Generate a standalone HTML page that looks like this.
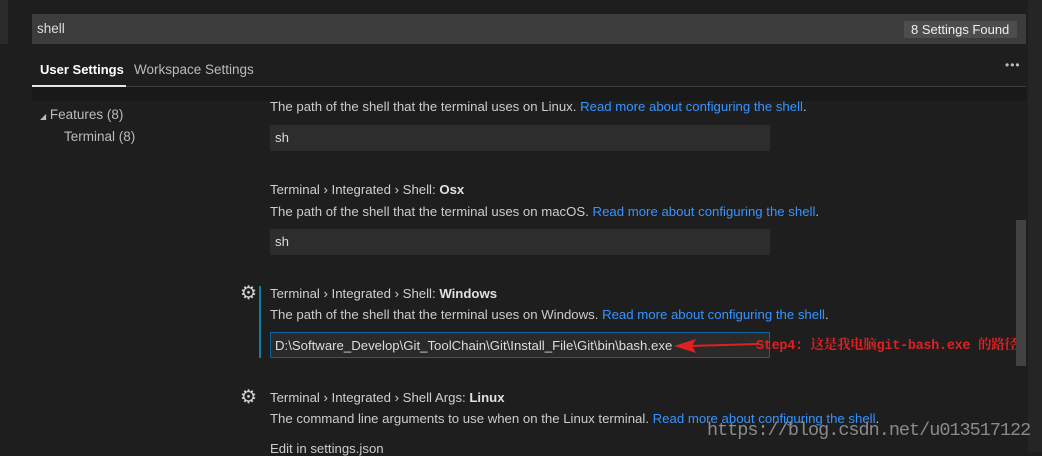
<!DOCTYPE html>
<html><head><meta charset="utf-8"><style>
*{margin:0;padding:0;box-sizing:border-box}
body{width:1042px;height:452px;background:#1e1e1e;font-family:"Liberation Sans",sans-serif;font-size:13.2px;color:#cccccc;position:relative;overflow:hidden;letter-spacing:0}
.a{position:absolute;white-space:nowrap}
.l{color:#3794ff}
.inp{position:absolute;left:270px;width:500px;height:26px;background:#2d2d2d;padding:5px 5px;color:#ddd}
b{color:#e0e0e0}
.t{color:#cfcfcf}
.g{position:absolute;font-size:19px;color:#d0d0d0;line-height:19px}
</style></head><body>
<div class="a" style="left:0;top:0;width:8px;height:44px;background:#2a2a2a"></div>
<div class="a" style="left:1028px;top:0;width:14px;height:452px;background:#252526"></div>
<div class="a" style="left:32px;top:14px;width:994px;height:30px;background:#3c3c3c"></div>
<div class="a" style="left:37px;top:21px;color:#ddd;font-size:13.5px">shell</div>
<div class="a" style="left:904px;top:21px;width:113px;height:17px;background:#4d4d4d;color:#eee;padding:1px 7px;font-size:13px">8 Settings Found</div>
<div class="a" style="left:40px;top:62px;color:#fff;font-weight:bold;font-size:13px">User Settings</div>
<div class="a" style="left:134px;top:62px;color:#bbb;font-size:13.5px">Workspace Settings</div>
<div class="a" style="left:1005px;top:58px;color:#bbb;font-size:12px;letter-spacing:1px">•••</div>
<div class="a" style="left:32px;top:86px;width:994px;height:1px;background:#3f3f3f"></div>
<div class="a" style="left:32px;top:85px;width:94px;height:2px;background:#e7e7e7"></div>
<div class="a" style="left:32px;top:87px;width:994px;height:14px;background:#191919"></div>
<div class="a" style="left:40px;top:107px;color:#bbb;font-size:13.5px"><span style="font-size:8px">◢</span> Features (8)</div>
<div class="a" style="left:64px;top:129px;color:#bbb;font-size:13.5px">Terminal (8)</div>
<div class="a" style="left:270px;top:99px">The path of the shell that the terminal uses on Linux. <span class="l">Read more about configuring the shell</span>.</div>
<div class="inp" style="top:125px">sh</div>
<div class="a t" style="left:270px;top:182px">Terminal › Integrated › Shell: <b>Osx</b></div>
<div class="a" style="left:270px;top:204px">The path of the shell that the terminal uses on macOS. <span class="l">Read more about configuring the shell</span>.</div>
<div class="inp" style="top:229px">sh</div>
<div class="a" style="left:259px;top:286px;width:2px;height:72px;background:#0e7fa0"></div>
<div class="g" style="left:240px;top:284px">⚙</div>
<div class="a t" style="left:270px;top:286px">Terminal › Integrated › Shell: <b>Windows</b></div>
<div class="a" style="left:270px;top:307px">The path of the shell that the terminal uses on Windows. <span class="l">Read more about configuring the shell</span>.</div>
<div class="inp" style="top:332px;border:1px solid #0e639c;background:#2a2a2a;padding:5px 4px">D:\Software_Develop\Git_ToolChain\Git\Install_File\Git\bin\bash.exe</div>
<svg class="a" style="left:670px;top:338px" width="90" height="16"><path d="M88 6 L20 8" stroke="#e02020" stroke-width="2"/><path d="M4 8 L26 1 L22 8 L26 15 Z" fill="#e02020"/></svg>
<div class="a" style="left:756px;top:333px;color:#e02020;font-family:'Liberation Mono','Noto Serif CJK SC',monospace;font-size:13.5px;font-weight:bold;letter-spacing:-0.3px">Step4: 这是我电脑git-bash.exe 的路径</div>
<div class="a" style="left:1016px;top:220px;width:10px;height:146px;background:#424242"></div>
<div class="g" style="left:240px;top:388px">⚙</div>
<div class="a t" style="left:270px;top:390px">Terminal › Integrated › Shell Args: <b>Linux</b></div>
<div class="a" style="left:270px;top:411px">The command line arguments to use when on the Linux terminal. <span class="l">Read more about configuring the shell</span>.</div>
<div class="a" style="left:270px;top:441px">Edit in settings.json</div>
<div class="a" style="left:707px;top:420px;color:#8a8a8a;font-family:'Liberation Mono',monospace;font-size:18.5px;letter-spacing:-1px">https://blog.csdn.net/u013517122</div>
</body></html>
